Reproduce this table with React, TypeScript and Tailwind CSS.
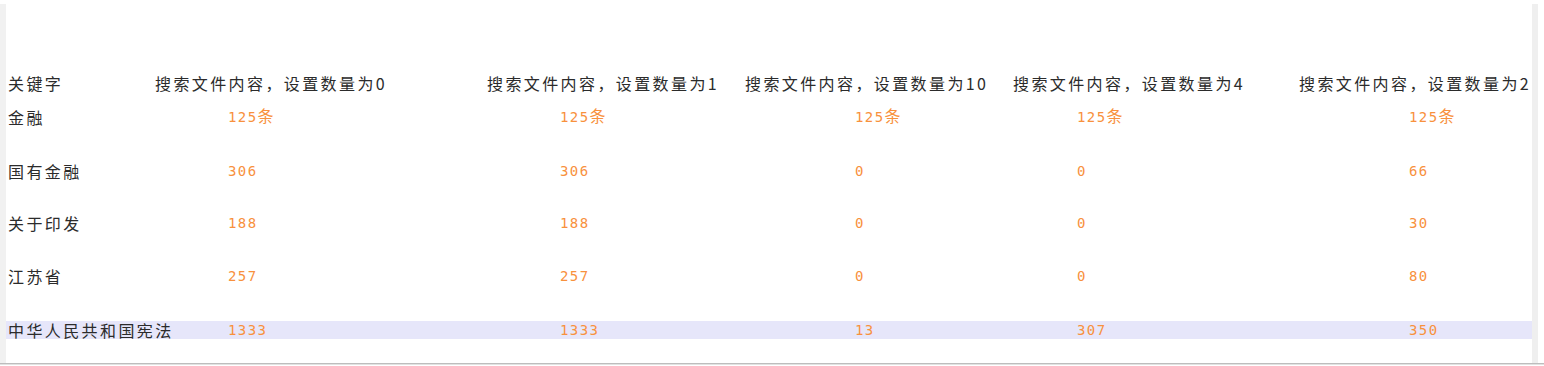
const HEADERS = [
  "搜索文件内容，设置数量为0",
  "搜索文件内容，设置数量为1",
  "搜索文件内容，设置数量为10",
  "搜索文件内容，设置数量为4",
  "搜索文件内容，设置数量为2",
];

const ROWS = [
  { keyword: "金融", values: ["125条", "125条", "125条", "125条", "125条"], gap: "mt-[15px]" },
  { keyword: "国有金融", values: ["306", "306", "0", "0", "66"], gap: "mt-[37px]" },
  { keyword: "关于印发", values: ["188", "188", "0", "0", "30"], gap: "mt-[34px]" },
  { keyword: "江苏省", values: ["257", "257", "0", "0", "80"], gap: "mt-[35px]" },
  { keyword: "中华人民共和国宪法", values: ["1333", "1333", "13", "307", "350"], gap: "mt-[36px]", active: true },
];

// column widths + where the number sits inside each column
const COLS = "grid-cols-[149px_332px_258px_268px_286px_233px]";
const VALUE_PAD = ["pl-[73px]", "pl-[73px]", "pl-[110px]", "pl-[64px]", "pl-[110px]"];

const cjk = "font-['Noto_Sans_CJK_SC',sans-serif]";
const mono = "font-['DejaVu_Sans_Mono','Noto_Sans_CJK_SC',monospace]";

function Value({ v }: { v: string }) {
  if (!v.endsWith("条")) return <>{v}</>;
  return (
    <>
      {v.slice(0, -1)}
      <span className={`${cjk} text-[16px] leading-none tracking-normal`}>条</span>
    </>
  );
}

export default function App() {
  return (
    <div className="h-[366px] w-[1544px] overflow-hidden bg-white">
      <div className="flex h-[363px]">
        {/* left gutter */}
        <div className="mt-[4px] w-[6px] bg-[#f1f1f1]" />

        {/* table */}
        <div className="w-[1526px] pt-[74px]">
          <div className={`grid h-[18px] items-center ${COLS} ${cjk} text-[16px] leading-[18px] tracking-[2.4px] text-[#2b2b2b]`}>
            <div className="pl-[2px]">关键字</div>
            {HEADERS.map((h) => (
              <div key={h} className="whitespace-nowrap">
                {h}
              </div>
            ))}
          </div>

          {ROWS.map((row) => (
            <div
              key={row.keyword}
              className={`grid h-[18px] items-center ${COLS} ${row.gap} ${row.active ? "bg-[#e6e6fa]" : ""}`}
            >
              <div className={`pl-[2px] ${cjk} text-[16px] leading-[18px] tracking-[2.4px] text-[#2b2b2b] whitespace-nowrap`}>
                {row.keyword}
              </div>
              {row.values.map((v, i) => (
                <div
                  key={i}
                  className={`${VALUE_PAD[i]} ${mono} text-[14px] leading-[18px] tracking-[1.4px] text-[#f8913d] whitespace-nowrap`}
                >
                  <Value v={v} />
                </div>
              ))}
            </div>
          ))}
        </div>

        {/* right scrollbar track */}
        <div className="mt-[4px] w-[6px] bg-[#efefef]" />
      </div>
      <div className="h-[1px] bg-[#bdbdbd]" />
      <div className="h-[1px] bg-[#e2e2e2]" />
    </div>
  );
}
